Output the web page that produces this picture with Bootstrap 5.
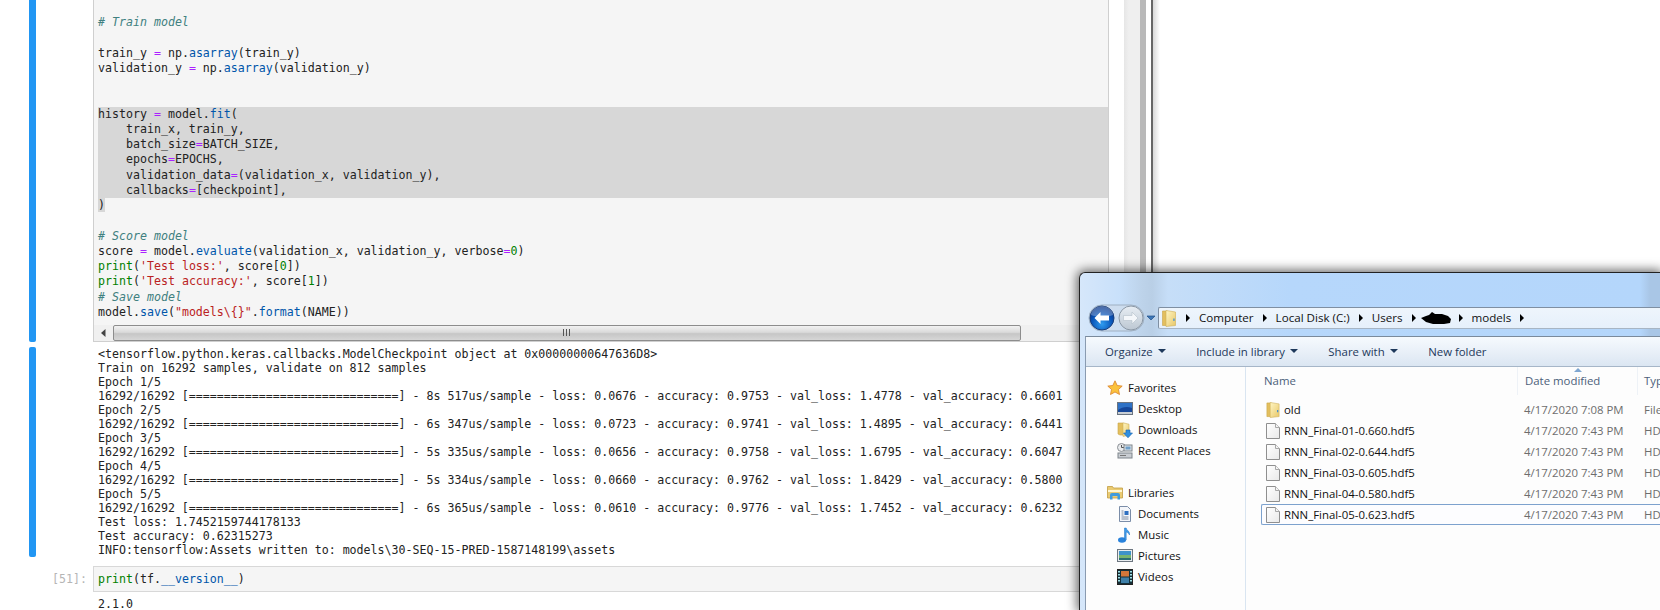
<!DOCTYPE html>
<html lang="en">
<head>
<meta charset="utf-8">
<title>Notebook and Explorer</title>
<link href="https://cdn.jsdelivr.net/npm/bootstrap@5.3.0/dist/css/bootstrap.min.css" rel="stylesheet">
<style>
html,body{height:610px;overflow:hidden;background:#fff}
body{position:relative;font-family:"DejaVu Sans Mono",monospace;font-size:11.62px;color:#000}
.nb-col{width:1109px;flex:none}
.nb-bar{width:7px;margin-left:29px;flex:none;background:#2196f3;border-radius:2px}
.nb-bar.cut{border-radius:0 0 2px 2px}
.nb-prompt{width:57px;flex:none;text-align:right;padding-right:6px;color:#b5b5b5;line-height:27px}
.nb-blank{width:93px;flex:none}
.nb-area{flex:1;min-width:0}
.code-box{background:#f5f5f5;border-left:1px solid #cfcfcf;border-right:1px solid #cfcfcf;border-bottom:1px solid #cfcfcf;height:341.5px;display:flex;flex-direction:column}
.code-lines{padding:15px 0 0 4px;height:325px;margin:0;font:inherit;line-height:15.25px;color:#222;overflow:hidden}
.ln{display:block;height:15.25px;white-space:pre}
.ln.sel{background:#d7d7d7;margin-right:-1px}
.ln.sel-end span{background:#d7d7d7}
.c-com{color:#408080;font-style:italic}.c-op{color:#aa22ff}.c-fn{color:#0055aa}.c-str{color:#ba2121}.c-num,.c-kw{color:#008000}
.hscroll{height:16px;background:#f0f0f0;display:flex;align-items:stretch;flex:none}
.hs-arrow{width:19px;display:flex;align-items:center;justify-content:center}
.hs-thumb{width:908px;border:1px solid #8d8d8d;border-radius:2px;background:linear-gradient(#f2f2f2,#dadada 45%,#c6c6c6 55%,#d6d6d6);display:flex;align-items:center;justify-content:center}
.out-text{padding-left:5px;line-height:14px;height:210px;color:#222;white-space:pre;margin:0;font:inherit}
.out-line{display:block;height:14px;line-height:14px}
.in-box{height:26px;background:#f5f5f5;border:1px solid #d8d8d8;padding-left:4px;line-height:25px;color:#222}
.out-small{padding-left:5px;line-height:14px;color:#222}
.gut-white{width:15px;flex:none}
.gut-track{width:16px;flex:none;background:linear-gradient(90deg,#e6e6e6,#efefef 30%,#efefef)}
.gut-thumb{width:6px;flex:none;background:#b9b9b9}
.gut-edge{width:5px;flex:none}
.back-win{flex:1;border-left:2px solid #666;background:linear-gradient(90deg,#d8d8d8,#fff 7px)}
.xp{position:absolute;left:1079px;top:272px;width:581px;height:338px;display:flex;flex-direction:column;font-family:"Open Sans",sans-serif;font-size:11.4px;color:#111;
 border-left:1px solid #222;border-top:1px solid #222;border-top-left-radius:6px;box-shadow:0 0 11px 2px rgba(0,0,0,.6);
 background:linear-gradient(90deg,#d6e7fa,#c8e0fa 40px,#bdd3ea 62px,#b9cfe6 72px,#c6def8 88px,#b6d7fb 210px,#b4d6fb 560px,#a9c6e6 570px)}
.xp-nav{height:22px;margin-top:34px;margin-bottom:7px;display:flex;flex:none}
.xp-navbtns{width:70px;margin-left:8px;flex:none}
.xp-addr{flex:1;border:1px solid #7f8fa2;border-bottom-color:#a7b5c4;border-right:0;border-radius:2px 0 0 2px;background:linear-gradient(#eef5fc,#e6f0fb);display:flex;align-items:center;gap:9px;padding-left:3px;font-size:11.6px}
.bc-arrow{width:0;height:0;border-left:4px solid #000;border-top:4px solid transparent;border-bottom:4px solid transparent;flex:none}
.xp-pane{flex:1;min-height:0;margin-left:5px;display:flex;flex-direction:column;border-top:1px solid #7a8a9c;border-left:1px solid #8a9bb0;background:#fdfdfd}
.xp-tools{height:30px;flex:none;background:linear-gradient(#f6fafe,#e9f0f8 50%,#dbe6f2);border-bottom:1px solid #a6b6c8;display:flex;align-items:center;padding-left:19px;color:#1e395b;gap:0}
.tool-item{display:flex;align-items:center;gap:5px;margin-right:30.5px;white-space:nowrap}
.tri-down{width:0;height:0;border-top:4px solid #1e395b;border-left:4px solid transparent;border-right:4px solid transparent;display:inline-block;flex:none}
.xp-body{flex:1;display:flex;min-height:0}
.xp-tree{width:160px;flex:none;border-right:1px solid #d9e5f1;padding:10px 0 0 0;margin:0;list-style:none}
.tree-row{height:21px;display:flex;align-items:center;color:#111;white-space:nowrap}
.tree-row.top{padding-left:21px;gap:5px}
.tree-row.sub{padding-left:31px;gap:5px}
.tree-gap{height:21px}
.xp-files{flex:1;min-width:0;overflow:hidden}
.file-head{height:28px;display:flex;color:#4c607a;position:relative}
.fh-name{width:272px;padding-left:18px;flex:none;line-height:28px;border-right:1px solid #eef2f7}
.fh-date{width:120px;padding-left:7px;flex:none;line-height:28px;border-right:1px solid #eef2f7;position:relative}
.fh-type{padding-left:6px;line-height:28px}
.sort-up{position:absolute;left:56px;top:1px;width:0;height:0;border-bottom:4px solid #7fa6d0;border-left:4px solid transparent;border-right:4px solid transparent}
.file-list{margin:4px 0 0 15px;padding:0;list-style:none}
.file-row{height:21px;display:flex;align-items:center;white-space:nowrap;border:1px solid transparent;border-right:0}
.file-row.on{border-color:#7da2ce;border-radius:2px 0 0 2px;background:#fdfdff}
.fr-icon{width:22px;padding-left:4px;flex:none;display:flex}
.fr-name{width:240px;flex:none}
.fr-date{width:120px;flex:none;color:#6d6d6d}
.fr-type{color:#6d6d6d}
</style>
</head>
<body>
<svg width="0" height="0" class="position-absolute">
 <defs>
  <linearGradient id="gf" x1="0" y1="0" x2="1" y2="1"><stop offset="0" stop-color="#fff6c4"/><stop offset="1" stop-color="#e8c768"/></linearGradient>
  <linearGradient id="gp" x1="0" y1="0" x2="1" y2="1"><stop offset="0" stop-color="#fff"/><stop offset="1" stop-color="#e9e9e9"/></linearGradient>
  <radialGradient id="gb" cx=".5" cy=".75" r=".7"><stop offset="0" stop-color="#2f9cf0"/><stop offset=".6" stop-color="#0a55b8"/><stop offset="1" stop-color="#06348a"/></radialGradient>
  <linearGradient id="gg" x1="0" y1="0" x2="0" y2="1"><stop offset="0" stop-color="#e8eef4"/><stop offset="1" stop-color="#bcc7d2"/></linearGradient>
  <symbol id="i-folder" viewBox="0 0 14 17"><path d="M.5 1h5v14.500H.5z" fill="#e3bf5e" stroke="#c9a548" stroke-width=".6"/><path d="M4 .5l9.500 1.500v13.500L4 16.500z" fill="url(#gf)" stroke="#cfae55" stroke-width=".6"/><rect x="11.300" y="8.500" width="1.300" height="2.400" fill="#3f8fd2"/></symbol>
  <symbol id="i-doc" viewBox="0 0 14 16"><path d="M.5.5h9l4 4v11H.5z" fill="url(#gp)" stroke="#8f8f8f"/><path d="M9.500.5v4h4" fill="#f4f4f4" stroke="#a8a8a8"/></symbol>
 </defs>
</svg>

<div class="d-flex" style="height:610px">
 <div class="nb-col">
  <div class="d-flex">
   <div class="nb-bar cut"></div>
   <div class="nb-prompt"></div>
   <div class="nb-area">
    <div class="code-box">
     <pre class="code-lines"><span class="ln c-com"># Train model</span><span class="ln"> </span><span class="ln">train_y <span class="c-op">=</span> np.<span class="c-fn">asarray</span>(train_y)</span><span class="ln">validation_y <span class="c-op">=</span> np.<span class="c-fn">asarray</span>(validation_y)</span><span class="ln"> </span><span class="ln"> </span><span class="ln sel">history <span class="c-op">=</span> model.<span class="c-fn">fit</span>(</span><span class="ln sel">    train_x, train_y,</span><span class="ln sel">    batch_size<span class="c-op">=</span>BATCH_SIZE,</span><span class="ln sel">    epochs<span class="c-op">=</span>EPOCHS,</span><span class="ln sel">    validation_data<span class="c-op">=</span>(validation_x, validation_y),</span><span class="ln sel">    callbacks<span class="c-op">=</span>[checkpoint],</span><span class="ln sel-end"><span>)</span></span><span class="ln"> </span><span class="ln c-com"># Score model</span><span class="ln">score <span class="c-op">=</span> model.<span class="c-fn">evaluate</span>(validation_x, validation_y, verbose<span class="c-op">=</span><span class="c-num">0</span>)</span><span class="ln"><span class="c-kw">print</span>(<span class="c-str">'Test loss:'</span>, score[<span class="c-num">0</span>])</span><span class="ln"><span class="c-kw">print</span>(<span class="c-str">'Test accuracy:'</span>, score[<span class="c-num">1</span>])</span><span class="ln c-com"># Save model</span><span class="ln">model.<span class="c-fn">save</span>(<span class="c-str">"models\{}"</span>.<span class="c-fn">format</span>(NAME))</span></pre>
     <div class="hscroll">
      <div class="hs-arrow"><svg width="5" height="8" viewBox="0 0 5 8"><path d="M4.500 0v8L0 4z" fill="#444"/></svg></div>
      <div class="hs-thumb"><svg width="9" height="7" viewBox="0 0 9 7"><path d="M.5 0v7M3.500 0v7M6.500 0v7" stroke="#555" stroke-width="1"/></svg></div>
     </div>
    </div>
   </div>
  </div>
  <div class="d-flex" style="margin-top:5.5px">
   <div class="nb-bar"></div>
   <div class="nb-prompt"></div>
   <div class="nb-area">
<pre class="out-text"><span class="out-line">&lt;tensorflow.python.keras.callbacks.ModelCheckpoint object at 0x00000000647636D8&gt;</span><span class="out-line">Train on 16292 samples, validate on 812 samples</span><span class="out-line">Epoch 1/5</span><span class="out-line">16292/16292 [==============================] - 8s 517us/sample - loss: 0.0676 - accuracy: 0.9753 - val_loss: 1.4778 - val_accuracy: 0.6601</span><span class="out-line">Epoch 2/5</span><span class="out-line">16292/16292 [==============================] - 6s 347us/sample - loss: 0.0723 - accuracy: 0.9741 - val_loss: 1.4895 - val_accuracy: 0.6441</span><span class="out-line">Epoch 3/5</span><span class="out-line">16292/16292 [==============================] - 5s 335us/sample - loss: 0.0656 - accuracy: 0.9758 - val_loss: 1.6795 - val_accuracy: 0.6047</span><span class="out-line">Epoch 4/5</span><span class="out-line">16292/16292 [==============================] - 5s 334us/sample - loss: 0.0660 - accuracy: 0.9762 - val_loss: 1.8429 - val_accuracy: 0.5800</span><span class="out-line">Epoch 5/5</span><span class="out-line">16292/16292 [==============================] - 6s 365us/sample - loss: 0.0610 - accuracy: 0.9776 - val_loss: 1.7452 - val_accuracy: 0.6232</span><span class="out-line">Test loss: 1.7452159744178133</span><span class="out-line">Test accuracy: 0.62315273</span><span class="out-line">INFO:tensorflow:Assets written to: models\30-SEQ-15-PRED-1587148199\assets</span></pre>
   </div>
  </div>
  <div class="d-flex" style="margin-top:9px">
   <div class="nb-prompt" style="width:93px">[51]:</div>
   <div class="nb-area"><div class="in-box"><span class="c-kw">print</span>(tf.<span class="c-fn">__version__</span>)</div></div>
  </div>
  <div class="d-flex" style="margin-top:4px">
   <div class="nb-blank"></div>
   <div class="nb-area out-small">2.1.0</div>
  </div>
 </div>
 <div class="gut-white"></div>
 <div class="gut-track"></div>
 <div class="gut-thumb"></div>
 <div class="gut-edge"></div>
 <div class="back-win"></div>
</div>

<div class="xp">
 <div class="xp-nav">
  <svg class="xp-navbtns" width="70" height="28" viewBox="0 0 70 28" style="margin-top:-3px;height:28px">
   <path d="M14 1h29a13 13 0 0 1 0 26H14a13 13 0 0 1 0-26z" fill="#cfdcea" fill-opacity=".7" stroke="#9fb0c2"/>
   <circle cx="14" cy="14" r="12" fill="url(#gb)" stroke="#1b3f7a"/>
   <path d="M3 11a11 9 0 0 1 22 0c-5 2-17 2-22 0z" fill="#fff" fill-opacity=".28"/>
   <path d="M6.500 14l6-6v3.500h8.500v5h-8.500V20z" fill="#fff"/>
   <circle cx="43" cy="14" r="12" fill="url(#gg)" stroke="#8b98a6"/>
   <path d="M50 14l-6-6v3.500h-8.500v5H44V20z" fill="#f4f7fa" stroke="#b4bfca" stroke-width=".6"/>
   <path d="M59 12h8l-4 4z" fill="#3d78b8" stroke="#1f4f86" stroke-width=".7"/>
  </svg>
  <div class="xp-addr">
   <svg width="14" height="17"><use href="#i-folder"/></svg>
   <span class="bc-arrow" style="margin-left:1px"></span><span>Computer</span>
   <span class="bc-arrow"></span><span>Local Disk (C:)</span>
   <span class="bc-arrow"></span><span>Users</span>
   <span class="bc-arrow"></span>
   <svg width="30" height="12" viewBox="0 0 30 12" style="margin:0 -1px 0 -4px"><path d="M0 6l5-2 3-1 3-3 3 2 7 0 6 2 3 3-1 4-6 1-11 0-7-2z" fill="#000"/></svg>
   <span class="bc-arrow"></span><span>models</span>
   <span class="bc-arrow"></span>
  </div>
 </div>
 <div class="xp-pane">
  <div class="xp-tools">
   <div class="tool-item"><span>Organize</span><i class="tri-down"></i></div>
   <div class="tool-item"><span>Include in library</span><i class="tri-down"></i></div>
   <div class="tool-item"><span>Share with</span><i class="tri-down"></i></div>
   <div class="tool-item"><span>New folder</span></div>
  </div>
  <div class="xp-body">
   <ul class="xp-tree">
    <li class="tree-row top"><svg width="16" height="16" viewBox="0 0 16 16"><path d="M8 .8l2.200 4.700 5 .6-3.700 3.400 1 5L8 12l-4.500 2.500 1-5L.8 6.100l5-.6z" fill="#fbc23c" stroke="#d9822b" stroke-width=".8"/></svg><span>Favorites</span></li>
    <li class="tree-row sub"><svg width="16" height="13" viewBox="0 0 16 13"><rect x=".5" y=".5" width="15" height="12" fill="#16479a" stroke="#6a7480"/><path d="M1 1h14v5C10 4 5 5 1 8z" fill="#2f72c6"/><rect x="1" y="10" width="14" height="2" fill="#c8ced4"/></svg><span>Desktop</span></li>
    <li class="tree-row sub"><svg width="16" height="16" viewBox="0 0 16 16"><path d="M1 1h5l1 1h1v11H3l-2-1z" fill="#e3bf5e" stroke="#c9a548" stroke-width=".6"/><path d="M6 .8l6 1.400v11l-6 1.200z" fill="url(#gf)" stroke="#cfae55" stroke-width=".6"/><path d="M9 8h4v3h2.500L11 15.800 6.500 11H9z" fill="#2f8fe0" stroke="#1a63ad" stroke-width=".6"/></svg><span>Downloads</span></li>
    <li class="tree-row sub"><svg width="16" height="16" viewBox="0 0 16 16"><circle cx="4.500" cy="4.500" r="4" fill="#e8eaec" stroke="#8a8f95"/><path d="M4.500 2v2.500H7" stroke="#555" fill="none"/><rect x="7" y="2" width="8" height="6" fill="#dfe5ea" stroke="#7f858c"/><rect x="8.500" y="3.500" width="5" height="3" fill="#6f9fc8"/><rect x="1" y="10" width="14" height="5" fill="#c9cdd2" stroke="#7f858c"/><rect x="3" y="12" width="6" height="1" fill="#777"/></svg><span>Recent Places</span></li>
    <li class="tree-gap"></li>
    <li class="tree-row top"><svg width="16" height="15" viewBox="0 0 16 15"><path d="M.5 3V1.500h5l1 1.500h9v10H.5z" fill="#eacb72" stroke="#c29c42" stroke-width=".8"/><path d="M1 5h14v2H1z" fill="#fff6d2"/><path d="M3 14.500V10a2 2 0 0 1 2-2h6a2 2 0 0 1 2 2v4.500h-2.500V11h-5v3.500z" fill="#3f9bdc"/></svg><span>Libraries</span></li>
    <li class="tree-row sub"><svg width="16" height="16" viewBox="0 0 16 16"><path d="M2.500.5h8l3 3v12h-11z" fill="#f4f6fa" stroke="#7b8da8"/><rect x="7.500" y="5" width="4" height="4" fill="#2f6fc0"/><path d="M4.500 5h2M4.500 7h2M4.500 9h2M4.500 11h7M4.500 13h7" stroke="#7d8aa0"/></svg><span>Documents</span></li>
    <li class="tree-row sub"><svg width="16" height="16" viewBox="0 0 16 16"><ellipse cx="5" cy="13" rx="4" ry="2.700" fill="#2a83dc"/><path d="M7.500 13V1h1.700c.4 2.700 4 3 3.300 7-.8-2-2.300-2.700-3.300-3v8z" fill="#3f9ae8" stroke="#1d70c4" stroke-width=".5"/></svg><span>Music</span></li>
    <li class="tree-row sub"><svg width="16" height="13" viewBox="0 0 16 13"><rect x=".5" y=".5" width="15" height="12" fill="#e9edf0" stroke="#6d7680"/><rect x="2" y="2" width="12" height="4" fill="#3f93c9"/><rect x="2" y="6" width="12" height="3" fill="#7ab56f"/><rect x="2" y="9" width="12" height="2" fill="#2c6f74"/></svg><span>Pictures</span></li>
    <li class="tree-row sub"><svg width="16" height="16" viewBox="0 0 16 16"><rect x=".5" y=".5" width="15" height="15" fill="#14303a" stroke="#222"/><rect x="4" y="2" width="8" height="5.500" fill="#d2763a"/><rect x="4" y="8.500" width="8" height="5.500" fill="#3e7fa8"/><path d="M2 2v1.500M2 5v1.500M2 8v1.500M2 11v1.500M14 2v1.500M14 5v1.500M14 8v1.500M14 11v1.500" stroke="#9fe0e6" stroke-width="2"/></svg><span>Videos</span></li>
   </ul>
   <div class="xp-files">
    <div class="file-head">
     <div class="fh-name">Name</div>
     <div class="fh-date"><i class="sort-up"></i>Date modified</div>
     <div class="fh-type">Type</div>
    </div>
    <ul class="file-list">
     <li class="file-row"><span class="fr-icon"><svg width="14" height="16"><use href="#i-folder"/></svg></span><span class="fr-name">old</span><span class="fr-date">4/17/2020 7:08 PM</span><span class="fr-type">File folder</span></li>
     <li class="file-row"><span class="fr-icon"><svg width="14" height="16"><use href="#i-doc"/></svg></span><span class="fr-name">RNN_Final-01-0.660.hdf5</span><span class="fr-date">4/17/2020 7:43 PM</span><span class="fr-type">HDF5 File</span></li>
     <li class="file-row"><span class="fr-icon"><svg width="14" height="16"><use href="#i-doc"/></svg></span><span class="fr-name">RNN_Final-02-0.644.hdf5</span><span class="fr-date">4/17/2020 7:43 PM</span><span class="fr-type">HDF5 File</span></li>
     <li class="file-row"><span class="fr-icon"><svg width="14" height="16"><use href="#i-doc"/></svg></span><span class="fr-name">RNN_Final-03-0.605.hdf5</span><span class="fr-date">4/17/2020 7:43 PM</span><span class="fr-type">HDF5 File</span></li>
     <li class="file-row"><span class="fr-icon"><svg width="14" height="16"><use href="#i-doc"/></svg></span><span class="fr-name">RNN_Final-04-0.580.hdf5</span><span class="fr-date">4/17/2020 7:43 PM</span><span class="fr-type">HDF5 File</span></li>
     <li class="file-row on"><span class="fr-icon"><svg width="14" height="16"><use href="#i-doc"/></svg></span><span class="fr-name">RNN_Final-05-0.623.hdf5</span><span class="fr-date">4/17/2020 7:43 PM</span><span class="fr-type">HDF5 File</span></li>
    </ul>
   </div>
  </div>
 </div>
</div>
<script src="https://cdn.jsdelivr.net/npm/bootstrap@5.3.0/dist/js/bootstrap.bundle.min.js"></script>
</body>
</html>
